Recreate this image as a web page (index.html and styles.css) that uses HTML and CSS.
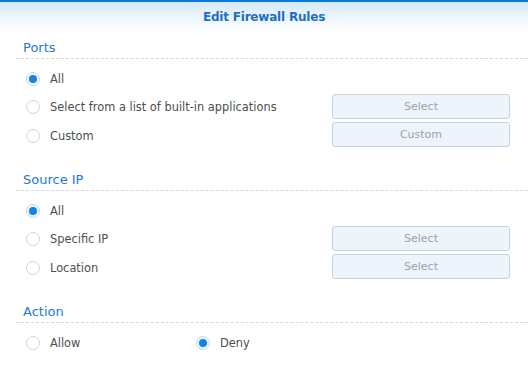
FILE: index.html
```html
<!DOCTYPE html>
<html>
<head>
<meta charset="utf-8">
<link rel="stylesheet" href="styles.css">
</head>
<body>
<div class="dialog">
  <div class="header"><span class="title">Edit Firewall Rules</span></div>
  <div class="content">
    <section class="section">
      <div class="heading">Ports</div>
      <div class="rows">
        <div class="row">
          <label class="opt"><span class="radio checked"></span><span class="label">All</span></label>
        </div>
        <div class="row">
          <label class="opt"><span class="radio"></span><span class="label">Select from a list of built-in applications</span></label>
          <button class="btn">Select</button>
        </div>
        <div class="row">
          <label class="opt"><span class="radio"></span><span class="label">Custom</span></label>
          <button class="btn">Custom</button>
        </div>
      </div>
    </section>
    <section class="section">
      <div class="heading">Source IP</div>
      <div class="rows">
        <div class="row">
          <label class="opt"><span class="radio checked"></span><span class="label">All</span></label>
        </div>
        <div class="row">
          <label class="opt"><span class="radio"></span><span class="label">Specific IP</span></label>
          <button class="btn">Select</button>
        </div>
        <div class="row">
          <label class="opt"><span class="radio"></span><span class="label">Location</span></label>
          <button class="btn">Select</button>
        </div>
      </div>
    </section>
    <section class="section">
      <div class="heading">Action</div>
      <div class="rows">
        <div class="row">
          <label class="opt opt-fixed"><span class="radio"></span><span class="label">Allow</span></label>
          <label class="opt"><span class="radio checked"></span><span class="label">Deny</span></label>
        </div>
      </div>
    </section>
  </div>
</div>
</body>
</html>
```
FILE: styles.css
```css
html, body {
  margin: 0;
  padding: 0;
  background: #ffffff;
}
body {
  font-family: "DejaVu Sans", Verdana, sans-serif;
  font-size: 11px;
  color: #444a50;
}
.dialog {
  width: 528px;
  height: 369px;
  overflow: hidden;
}
.header {
  height: 30px;
  border-top: 2px solid #0b7ad8;
  background: linear-gradient(to bottom, #d4e8f9 0%, #eef6fd 55%, #ffffff 100%);
  display: flex;
  align-items: center;
  justify-content: center;
}
.title {
  font-weight: bold;
  font-size: 12px;
  color: #1c6fc2;
  letter-spacing: -0.2px;
}
.content {
  display: flex;
  flex-direction: column;
  gap: 20px;
  padding: 5px 0 0 16px;
}
.heading {
  line-height: 21px;
  padding-left: 7px;
  font-size: 13px;
  color: #1f7ad0;
  border-bottom: 1px dashed #d3d8de;
  box-sizing: content-box;
  padding-top: 0;
  height: 21px;
}
.rows {
  padding-top: 5px;
  padding-left: 10px;
}
.row {
  height: 28px;
  display: flex;
  align-items: center;
  justify-content: space-between;
  padding-right: 18px;
}
.row:nth-child(3) { height: 29px; }
.opt {
  display: flex;
  align-items: center;
  padding-top: 2px;
}
.opt-fixed {
  width: 170px;
}
.row .opt + .opt {
  margin-right: auto;
}
.radio {
  width: 14px;
  height: 14px;
  box-sizing: border-box;
  border: 1px solid #d2d6da;
  border-radius: 50%;
  background: #ffffff;
  margin-right: 10px;
  display: flex;
  align-items: center;
  justify-content: center;
}
.radio.checked {
  border-color: #c2dbf2;
  background: #eef5fc;
}
.radio.checked::after {
  content: "";
  width: 8px;
  height: 8px;
  border-radius: 50%;
  background: #1483e6;
}
.label {
  color: #4a4f55;
  font-size: 11.4px;
}
.btn {
  width: 178px;
  height: 25px;
  box-sizing: border-box;
  border: 1px solid #c8d2dd;
  border-radius: 3px;
  background: #eef4fb;
  color: #9aa3ad;
  font-family: "DejaVu Sans", Verdana, sans-serif;
  font-size: 11px;
  padding: 0;
}
```
